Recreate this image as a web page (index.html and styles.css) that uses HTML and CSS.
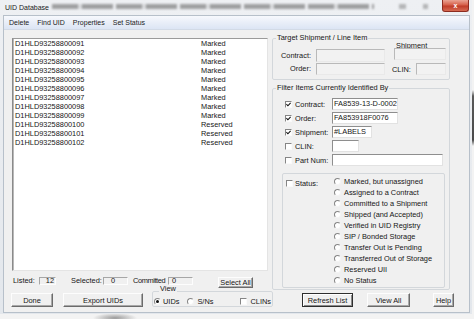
FILE: index.html
```html
<!DOCTYPE html>
<html>
<head>
<meta charset="utf-8">
<title>UID Database</title>
<link rel="stylesheet" href="styles.css">
</head>
<body>
<div class="screen">
  <div class="window">
    <div class="titlebar">
      <span class="title">UID Database</span>
      <span class="smudge smudge-main"></span>
      <span class="smudge smudge-a"></span>
      <span class="smudge smudge-b"></span>
      <span class="close">x</span>
    </div>
    <div class="client">
      <div class="menubar">
        <span class="menu-item">Delete</span>
        <span class="menu-item">Find UID</span>
        <span class="menu-item">Properties</span>
        <span class="menu-item">Set Status</span>
      </div>
      <div class="dialog">
        <div class="main">
          <div class="left">
            <div class="listbox">
              <div class="row"><span class="uid">D1HLD93258800091</span><span>Marked</span></div>
              <div class="row"><span class="uid">D1HLD93258800092</span><span>Marked</span></div>
              <div class="row"><span class="uid">D1HLD93258800093</span><span>Marked</span></div>
              <div class="row"><span class="uid">D1HLD93258800094</span><span>Marked</span></div>
              <div class="row"><span class="uid">D1HLD93258800095</span><span>Marked</span></div>
              <div class="row"><span class="uid">D1HLD93258800096</span><span>Marked</span></div>
              <div class="row"><span class="uid">D1HLD93258800097</span><span>Marked</span></div>
              <div class="row"><span class="uid">D1HLD93258800098</span><span>Marked</span></div>
              <div class="row"><span class="uid">D1HLD93258800099</span><span>Marked</span></div>
              <div class="row"><span class="uid">D1HLD93258800100</span><span>Reserved</span></div>
              <div class="row"><span class="uid">D1HLD93258800101</span><span>Reserved</span></div>
              <div class="row"><span class="uid">D1HLD93258800102</span><span>Reserved</span></div>
            </div>
            <div class="counts">
              <span class="clabel w-listed">Listed:</span>
              <span class="cbox box-listed">12</span>
              <span class="clabel w-selected">Selected:</span>
              <span class="cbox box-selected">0</span>
              <span class="clabel w-committed">Committed</span>
              <span class="cbox box-committed">0</span>
              <span class="btn btn-selall">Select All</span>
            </div>
          </div>
          <div class="right">
            <fieldset class="group target">
              <legend>Target Shipment / Line Item</legend>
              <div class="target-grid">
                <span class="ship-label">Shipment</span>
                <span class="t-label t-contract">Contract:</span>
                <span class="field disabled t-in-contract"></span>
                <span class="field disabled ship-in"></span>
                <span class="t-label t-order">Order:</span>
                <span class="field disabled t-in-order"></span>
                <span class="clin-wrap"><span>CLIN:</span><span class="field disabled clin-in"></span></span>
              </div>
            </fieldset>
            <fieldset class="group filter">
              <legend>Filter Items Currently Identified By</legend>
              <div class="frow">
                <span class="check-label"><span class="cb"><svg viewBox="0 0 5 5" width="5" height="5"><path d="M0.4 2.2 L1.9 3.8 L4.6 0.9" fill="none" stroke="#111" stroke-width="1.1"/></svg></span>Contract:</span>
                <span class="field input w-long">FA8539-13-D-0002</span>
              </div>
              <div class="frow">
                <span class="check-label"><span class="cb"><svg viewBox="0 0 5 5" width="5" height="5"><path d="M0.4 2.2 L1.9 3.8 L4.6 0.9" fill="none" stroke="#111" stroke-width="1.1"/></svg></span>Order:</span>
                <span class="field input w-long">FA853918F0076</span>
              </div>
              <div class="frow">
                <span class="check-label"><span class="cb"><svg viewBox="0 0 5 5" width="5" height="5"><path d="M0.4 2.2 L1.9 3.8 L4.6 0.9" fill="none" stroke="#111" stroke-width="1.1"/></svg></span>Shipment:</span>
                <span class="field input w-ship">#LABELS</span>
              </div>
              <div class="frow">
                <span class="check-label"><span class="cb"></span>CLIN:</span>
                <span class="field input w-clin"></span>
              </div>
              <div class="frow">
                <span class="check-label"><span class="cb"></span>Part Num:</span>
                <span class="field input w-part"></span>
              </div>
              <div class="status-box">
                <div class="status-check"><span class="cb"></span>Status:</div>
                <div class="radios">
                  <div class="radio-row"><span class="rb"></span>Marked, but unassigned</div>
                  <div class="radio-row"><span class="rb"></span>Assigned to a Contract</div>
                  <div class="radio-row"><span class="rb"></span>Committed to a Shipment</div>
                  <div class="radio-row"><span class="rb"></span>Shipped (and Accepted)</div>
                  <div class="radio-row"><span class="rb"></span>Verified in UID Registry</div>
                  <div class="radio-row"><span class="rb"></span>SIP / Bonded Storage</div>
                  <div class="radio-row"><span class="rb"></span>Transfer Out is Pending</div>
                  <div class="radio-row"><span class="rb"></span>Transferred Out of Storage</div>
                  <div class="radio-row"><span class="rb"></span>Reserved UII</div>
                  <div class="radio-row"><span class="rb"></span>No Status</div>
                </div>
              </div>
            </fieldset>
          </div>
        </div>
        <div class="buttons">
          <span class="btn btn-done">Done</span>
          <span class="btn btn-export">Export UIDs</span>
          <fieldset class="group view">
            <legend>View</legend>
            <div class="view-row">
              <span class="rb on"><span class="dot"></span></span><span class="vt">UIDs</span>
              <span class="rb rb-sns"></span><span class="vt">S/Ns</span>
              <span class="cb cb-clins"></span><span class="vt">CLINs</span>
            </div>
          </fieldset>
          <span class="btn btn-default btn-refresh">Refresh List</span>
          <span class="btn btn-viewall">View All</span>
          <span class="btn btn-help">Help</span>
        </div>
      </div>
    </div>
  </div>
</div>
</body>
</html>
```

FILE: styles.css
```css
* { box-sizing: border-box; }
html, body { margin: 0; padding: 0; }
body {
  width: 474px;
  height: 319px;
  overflow: hidden;
  font-family: "Liberation Sans", Arial, sans-serif;
  font-size: 7.4px;
  color: #161616;
  background: #f2f2f2;
}

.screen {
  width: 474px;
  height: 319px;
  background:
    linear-gradient(to bottom, transparent 90px, #5a5a5a 96px, #4a4a4a 140px, transparent 146px) right top / 2px 100% no-repeat,
    radial-gradient(ellipse 22px 5px at 115px 318px, #9a9a9a, transparent),
    #f3f3f3;
}

.window {
  width: 472px;
  height: 314px;
  background: linear-gradient(#eef0f3, #e3e7ec);
  display: flex;
  flex-direction: column;
}

/* ---------- title bar ---------- */
.titlebar {
  height: 16px;
  display: flex;
  align-items: flex-start;
}
.title {
  padding-left: 5px;
  line-height: 16px;
  font-size: 7px;
  color: #1a1a1a;
  white-space: nowrap;
}
.smudge {
  display: block;
  height: 5px;
  margin-top: 4px;
  filter: blur(1.3px);
}
.smudge-main {
  width: 322px;
  margin-left: 3px;
  background: repeating-linear-gradient(90deg, rgba(95,95,95,.55) 0 26px, rgba(150,150,150,.25) 26px 30px, rgba(80,80,80,.5) 30px 61px, transparent 61px 64px);
}
.smudge-a { width: 7px; margin-left: 25px; background: rgba(110,110,110,.45); }
.smudge-b { width: 5px; margin-left: 17px; background: rgba(110,110,110,.45); }
.close {
  margin-left: auto;
  margin-right: 3px;
  width: 27px;
  height: 12px;
  border: 1px solid #8d2c20;
  border-top: none;
  border-radius: 0 0 3px 3px;
  background: linear-gradient(#eaa393, #d6604a 45%, #c13d29 55%, #d66a52);
  color: #fff;
  font-weight: bold;
  font-size: 7px;
  line-height: 11px;
  text-align: center;
}

/* ---------- client ---------- */
.client {
  margin: 0 3px 0 4px;
  height: 296px;
  display: flex;
  flex-direction: column;
  box-shadow: 0 0 0 1px #b7c0ca;
}
.menubar {
  height: 14px;
  display: flex;
  padding-left: 1px;
  background: linear-gradient(#f7f9fd, #e9eef8 50%, #dce5f4);
  border-bottom: 1px solid #d2dae6;
}
.menu-item {
  padding: 0 4px;
  line-height: 14px;
  font-size: 7px;
  color: #1c1c1c;
  white-space: nowrap;
}

.dialog {
  flex: 1;
  background: #f0f0f0;
  padding: 8px 0 0 8px;
  display: flex;
  flex-direction: column;
}
.main {
  display: flex;
  gap: 4px;
  height: 250px;
}

/* ---------- list ---------- */
.left {
  width: 256px;
  display: flex;
  flex-direction: column;
}
.listbox {
  height: 233px;
  background: #fff;
  border: 1px solid;
  border-color: #9a9a9a #e4e4e4 #e4e4e4 #8a8a8a;
  box-shadow: inset 1px 0 0 #b8b8b8;
  padding-left: 2px;
}
.row {
  display: flex;
  height: 9px;
  line-height: 9px;
  white-space: nowrap;
}
.uid { width: 186px; }

.counts {
  display: flex;
  align-items: flex-start;
  margin-top: 6px;
  height: 11px;
  padding-left: 1px;
}
.clabel { line-height: 8px; white-space: nowrap; }
.w-listed { width: 26px; }
.w-selected { width: 32px; margin-left: 15px; }
.w-committed { width: 35px; margin-left: 5px; letter-spacing: -0.4px; }
.cbox {
  height: 8px;
  line-height: 6px;
  border: 1px solid;
  border-color: #a6a6a6 #fdfdfd #fdfdfd #a6a6a6;
}
.box-listed { width: 17px; text-align: right; padding-right: 1px; }
.box-selected { width: 25px; padding-left: 7px; }
.box-committed { width: 25px; padding-left: 3px; }

/* ---------- buttons ---------- */
.btn {
  display: flex;
  align-items: center;
  justify-content: center;
  height: 14px;
  background: #f0f0f0;
  border: 1px solid;
  border-color: #fdfdfd #6b6b6b #6b6b6b #fdfdfd;
  box-shadow: inset -1px -1px 0 #a8a8a8;
  white-space: nowrap;
}
.btn-default {
  border: 1px solid #2e2e2e;
  box-shadow: inset 1px 1px 0 #fff, inset -1px -1px 0 #8a8a8a;
}
.btn-selall { width: 35px; height: 11px; margin-left: 25px; }

.buttons {
  display: flex;
  align-items: flex-end;
  height: 14px;
  margin-top: 5px;
  margin-left: -1px;
}
.btn-done { width: 42px; }
.btn-export { width: 80px; margin-left: 10px; }
.btn-refresh { width: 51px; margin-left: 29px; }
.btn-viewall { width: 43px; margin-left: 14px; }
.btn-help { width: 21px; margin-left: 23px; }

/* ---------- group boxes ---------- */
.group {
  margin: 0;
  padding: 0;
  border: 1px solid #d3d7db;
  border-radius: 2px;
  min-width: 0;
}
.group legend {
  padding: 0 1px 2px;
  margin-left: 3px;
  line-height: 9px;
  white-space: nowrap;
}

.right {
  width: 178px;
  margin-top: -5px;
  display: flex;
  flex-direction: column;
}
.target { padding: 0 3px 4px 0; }
.target-grid {
  display: grid;
  grid-template-columns: 39px 4px 69px 7px 54px;
  grid-template-rows: 5px 13px 1px 12px;
}
.ship-label {
  grid-column: 5;
  grid-row: 1;
  align-self: end;
  line-height: 9px;
  padding-left: 4px;
  margin-bottom: -1px;
}
.t-label { grid-column: 1; text-align: right; padding-right: 1px; }
.t-contract { grid-row: 2; line-height: 13px; }
.t-order { grid-row: 4; line-height: 12px; }
.t-in-contract { grid-column: 3; grid-row: 2; }
.t-in-order { grid-column: 3; grid-row: 4; }
.ship-in { grid-column: 5; grid-row: 2; margin-left: 2px; height: 12px; margin-top: -1px; }
.clin-wrap {
  grid-column: 5;
  grid-row: 4;
  display: flex;
  align-items: center;
}
.clin-in { margin-left: auto; width: 30px; height: 12px; }

.field {
  display: block;
  border: 1px solid;
  padding-left: 1px;
  line-height: 10px;
  white-space: nowrap;
  overflow: hidden;
}
.disabled {
  background: #f2f2f2;
  border-color: #b9b9b9 #e9e9e9 #e9e9e9 #b9b9b9;
}
.input {
  height: 12px;
  background: #fff;
  border-color: #8e8e8e #e2e2e2 #e2e2e2 #8e8e8e;
}
.w-long { width: 66px; }
.w-ship { width: 40px; }
.w-clin { width: 27px; }
.w-part { width: 111px; }

.filter {
  margin-top: 3px;
  padding: 3px 0 1px 0;
}
.frow {
  display: flex;
  align-items: center;
  height: 14px;
  padding-left: 12px;
}
.check-label {
  width: 47px;
  display: flex;
  align-items: center;
  gap: 3px;
  white-space: nowrap;
}

.cb {
  width: 7px;
  height: 7px;
  flex: none;
  display: inline-flex;
  align-items: center;
  justify-content: center;
  background: #fff;
  border: 1px solid;
  border-color: #858585 #fafafa #fafafa #858585;
}
.cb svg { display: block; }
.rb {
  width: 7px;
  height: 7px;
  flex: none;
  display: inline-flex;
  align-items: center;
  justify-content: center;
  border-radius: 50%;
  background: #fff;
  border: 1px solid;
  border-color: #858585 #f4f4f4 #f4f4f4 #858585;
}
.rb .dot {
  width: 3px;
  height: 3px;
  border-radius: 50%;
  background: #111;
}

.status-box {
  margin: 6px 4px 0 9px;
  height: 115px;
  border: 1px solid #d3d7db;
  border-radius: 2px;
  display: flex;
  padding: 1.5px 0 0 3px;
}
.status-check {
  width: 48px;
  height: 11.1px;
  margin-top: 2px;
  display: flex;
  align-items: center;
  gap: 2px;
}
.radios { display: flex; flex-direction: column; }
.radio-row {
  height: 11.1px;
  display: flex;
  align-items: center;
  gap: 3px;
  white-space: nowrap;
}

.view {
  width: 121px;
  height: 22px;
  margin-left: 9px;
  padding: 0 0 0 1px;
}
.view legend {
  margin-left: 5px;
  padding: 0 1px 4px;
  line-height: 8px;
}
.view-row {
  display: flex;
  align-items: center;
  height: 9px;
}
.vt { margin-left: 2px; white-space: nowrap; }
.rb-sns { margin-left: 8px; }
.rb-sns + .vt { margin-left: 3px; }
.cb-clins { margin-left: 27px; }
.cb-clins + .vt { margin-left: 3px; }
```
